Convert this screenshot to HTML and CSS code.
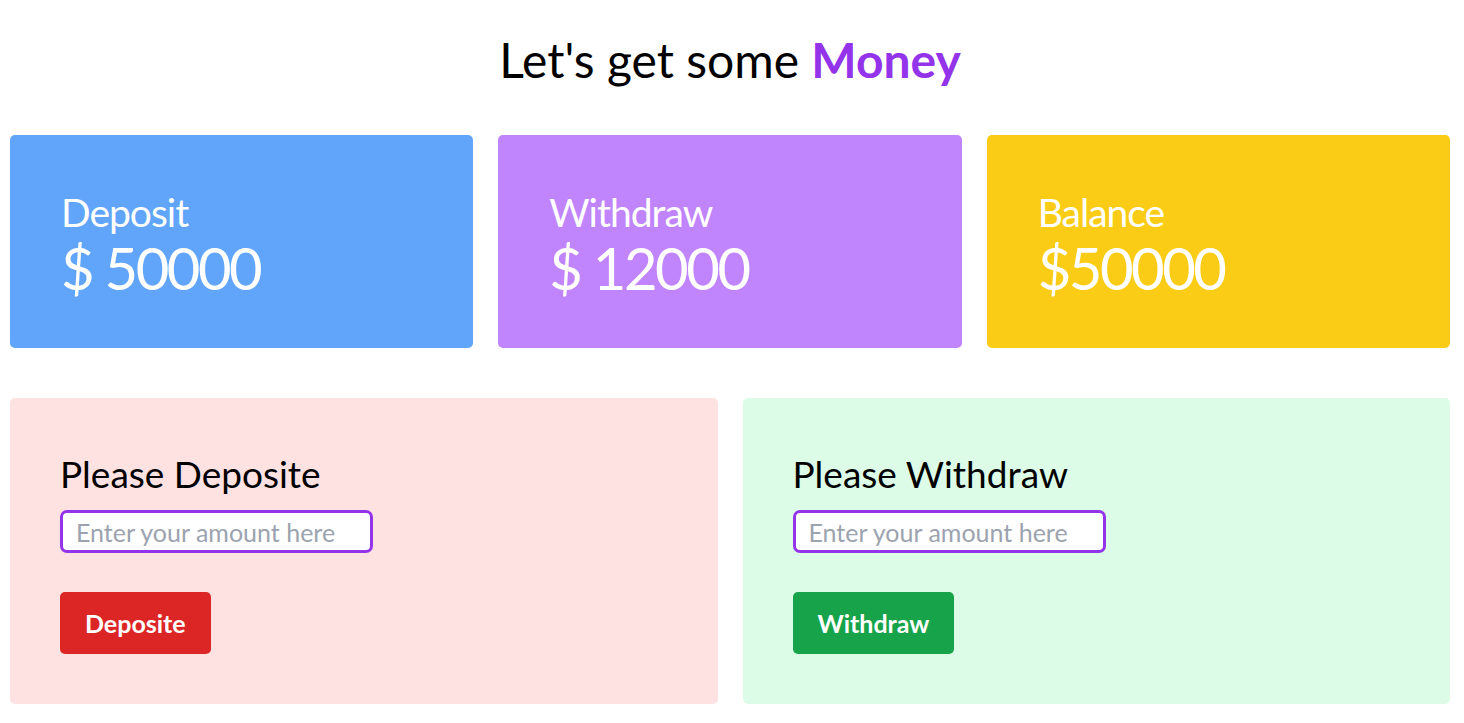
FILE: index.html
```html
<!DOCTYPE html>
<html lang="en">
<head>
<meta charset="utf-8">
<title>Let's get some Money</title>
<link rel="stylesheet" href="styles.css">
</head>
<body>
<div class="page">
  <h1 class="title">Let's get some <span class="accent">Money</span></h1>
  <div class="stats">
    <div class="stat stat-blue">
      <div class="stat-label">Deposit</div>
      <div class="stat-value">$ 50000</div>
    </div>
    <div class="stat stat-purple">
      <div class="stat-label">Withdraw</div>
      <div class="stat-value">$ 12000</div>
    </div>
    <div class="stat stat-yellow">
      <div class="stat-label">Balance</div>
      <div class="stat-value">$50000</div>
    </div>
  </div>
  <div class="actions">
    <div class="action action-red">
      <h2 class="action-title">Please Deposite</h2>
      <input class="amount" type="text" placeholder="Enter your amount here">
      <button class="btn btn-red">Deposite</button>
    </div>
    <div class="action action-green">
      <h2 class="action-title">Please Withdraw</h2>
      <input class="amount" type="text" placeholder="Enter your amount here">
      <button class="btn btn-green">Withdraw</button>
    </div>
  </div>
</div>
</body>
</html>
```
FILE: styles.css
```css
* { box-sizing: border-box; }
body {
  margin: 0;
  background: #ffffff;
  font-family: "Lato", "Open Sans", sans-serif;
  color: #000;
}
.page {
  padding: 0 14px 0 10px;
}
.title {
  margin: 0;
  padding-top: 36px;
  height: 135px;
  font-size: 48px;
  line-height: 1;
  font-weight: 400;
  text-align: center;
}
.accent {
  color: #9333ea;
  font-weight: 700;
}
.stats {
  display: grid;
  grid-template-columns: repeat(3, 1fr);
  gap: 25px;
}
.stat {
  height: 213px;
  border-radius: 5px;
  padding: 6px 51px 0 51px;
  display: flex;
  flex-direction: column;
  justify-content: center;
  color: #fff;
}
.stat-blue { background: #60a5fa; }
.stat-purple { background: #c084fc; }
.stat-yellow { background: #facc15; }
.stat-label {
  font-size: 39px;
  letter-spacing: -1px;
  line-height: 1.2;
}
.stat-value {
  font-size: 58px;
  letter-spacing: -2.5px;
  line-height: 1.1;
}
.actions {
  display: grid;
  grid-template-columns: 1fr 1fr;
  gap: 25px;
  margin-top: 50px;
}
.action {
  height: 306px;
  border-radius: 5px;
  padding: 52px 50px 0 50px;
}
.action-red { background: #fee2e2; }
.action-green { background: #dcfce7; }
.action-title {
  margin: 0;
  font-size: 37px;
  line-height: 1.3;
  font-weight: 400;
}
.amount {
  display: block;
  margin-top: 12px;
  width: 313px;
  height: 43px;
  border: 3px solid #9333ea;
  border-radius: 7px;
  padding: 0 13px;
  font-family: inherit;
  font-size: 25px;
  background: #fff;
  outline: none;
}
.amount::placeholder { color: #9ca3af; }
.btn {
  display: block;
  margin-top: 39px;
  height: 62px;
  padding: 0 25px;
  border: none;
  border-radius: 5px;
  color: #fff;
  font-family: inherit;
  font-size: 25px;
  font-weight: 700;
  cursor: pointer;
}
.btn-red { background: #dc2626; }
.btn-green { background: #16a34a; }
```
